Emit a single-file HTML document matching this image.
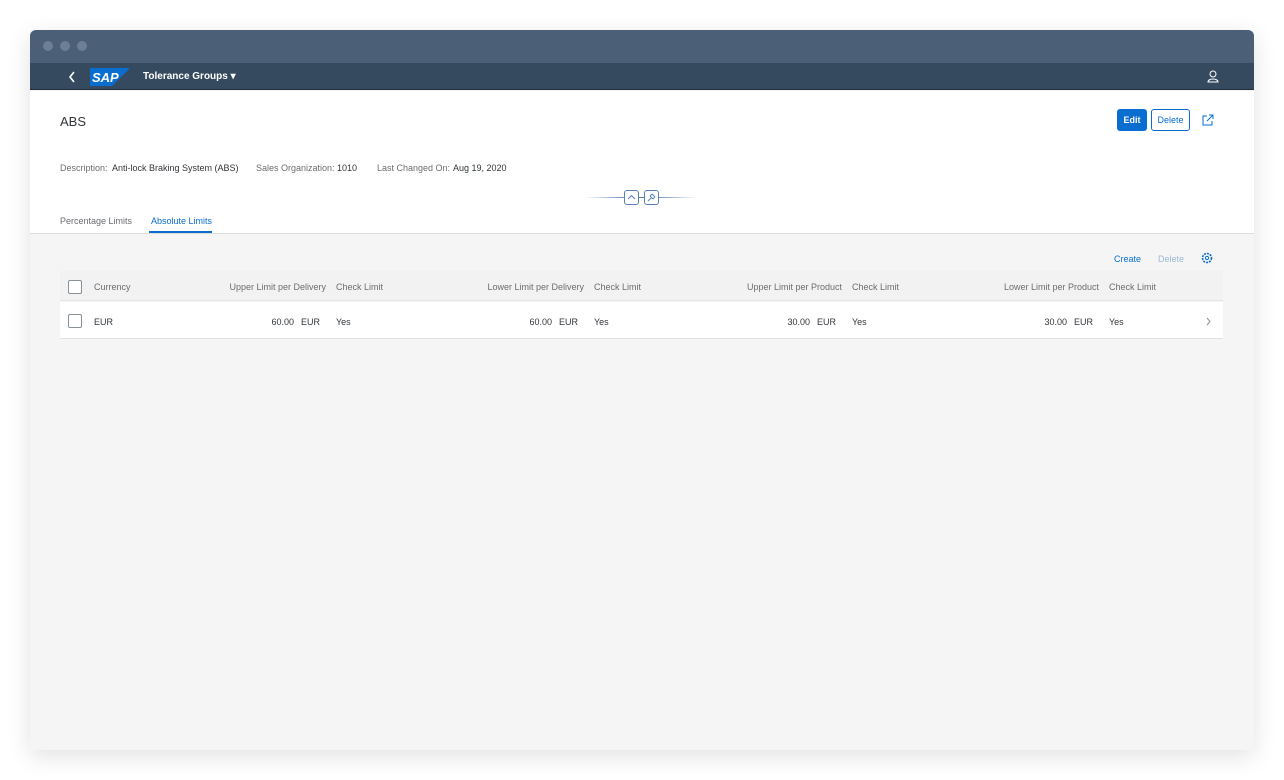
<!DOCTYPE html>
<html><head><style>
*{margin:0;padding:0;box-sizing:border-box}
body{width:1284px;height:780px;background:#fff;font-family:"Liberation Sans",sans-serif;position:relative;overflow:hidden}
.win{position:absolute;left:30px;top:30px;width:1224px;height:720px;background:#f5f5f5;border-radius:6px 6px 0 0;box-shadow:0 6px 24px rgba(0,0,0,.12);overflow:hidden}
.tb{position:absolute;left:0;top:0;width:100%;height:33px;background:#4b5f77}
.dot{position:absolute;top:11px;width:10px;height:10px;border-radius:50%;background:#6d7f94}
.shell{position:absolute;left:0;top:33px;width:100%;height:27px;background:#354a5f;border-bottom:1px solid #24303d}
.hdr{position:absolute;left:0;top:61px;width:100%;height:143px;background:#fff;border-bottom:1px solid #dcdcdc}
.t{position:absolute;font-size:9px;color:#32363a;white-space:nowrap}
.r{text-align:right}
.lbl{color:#6a6d70}
</style></head><body>
<div class="win">
<div class="tb"><div class="dot" style="left:13px"></div><div class="dot" style="left:30px"></div><div class="dot" style="left:47px"></div></div>
<div class="shell">
<svg style="position:absolute;left:38px;top:8px" width="8" height="12"><path d="M6 1L2 6l4 5" stroke="#fff" stroke-width="1.6" fill="none"/></svg>
<svg style="position:absolute;left:60px;top:5px" width="40" height="18"><path d="M0 0H40L22 18H0Z" fill="#0a6ed1"/><text x="2" y="14" font-family="Liberation Sans" font-weight="bold" font-style="italic" font-size="13" fill="#fff">SAP</text></svg>
<div class="t" style="left:113px;top:8px;color:#fff;font-weight:bold;font-size:10px">Tolerance Groups ▾</div>
<svg style="position:absolute;left:1177px;top:7px" width="12" height="13"><circle cx="6" cy="4" r="3" stroke="#fff" fill="none"/><path d="M1 12c0-4 10-4 10 0z" stroke="#fff" fill="none"/></svg>
</div>
<div class="hdr">
<div class="t" style="left:30px;top:23px;font-size:13px">ABS</div>
<div style="position:absolute;left:1087px;top:18px;width:30px;height:22px;background:#0a6ed1;border-radius:3px;color:#fff;font-size:9px;font-weight:bold;text-align:center;line-height:22px">Edit</div>
<div style="position:absolute;left:1121px;top:18px;width:39px;height:22px;border:1px solid #0a6ed1;border-radius:3px;color:#0a6ed1;font-size:9px;text-align:center;line-height:20px">Delete</div>
<svg style="position:absolute;left:1172px;top:23px" width="12" height="12"><path d="M5 2H1v9h9V7M7 1h4v4M11 1L5 7" stroke="#0a6ed1" fill="none"/></svg>
<div class="t lbl" style="left:30px;top:72px">Description:</div><div class="t" style="left:82px;top:72px">Anti-lock Braking System (ABS)</div>
<div class="t lbl" style="left:226px;top:72px">Sales Organization:</div><div class="t" style="left:307px;top:72px">1010</div>
<div class="t lbl" style="left:347px;top:72px">Last Changed On:</div><div class="t" style="left:423px;top:72px">Aug 19, 2020</div>
<div style="position:absolute;left:555px;top:106px;width:112px;height:1px;background:linear-gradient(90deg,rgba(90,130,180,0),#5a82b4 40%,#5a82b4 60%,rgba(90,130,180,0))"></div>
<div style="position:absolute;left:594px;top:99px;width:15px;height:15px;background:#fff;border:1px solid #5a82b4;border-radius:3px"></div>
<svg style="position:absolute;left:594px;top:99px" width="15" height="15"><path d="M4 9l3.5-3.5L11 9" stroke="#5a82b4" fill="none"/></svg>
<div style="position:absolute;left:614px;top:99px;width:15px;height:15px;background:#fff;border:1px solid #5a82b4;border-radius:3px"></div>
<svg style="position:absolute;left:614px;top:99px" width="15" height="15"><path d="M4 11l3-3M6 6l3 3M8 4l3 3M8 4L6 6M11 7L9 9" stroke="#5a82b4" fill="none"/></svg>
<div class="t lbl" style="left:30px;top:125px">Percentage Limits</div>
<div class="t" style="left:121px;top:125px;color:#0a6ed1">Absolute Limits</div>
<div style="position:absolute;left:119px;top:140px;width:63px;height:2px;background:#0a6ed1"></div>
</div>
<div class="t" style="left:1084px;top:224px;color:#0a6ed1">Create</div>
<div class="t" style="left:1128px;top:224px;color:#9fb8d6">Delete</div>
<svg style="position:absolute;left:1171px;top:222px" width="12" height="12"><circle cx="6" cy="6" r="4.5" stroke="#0a6ed1" stroke-dasharray="2 1" stroke-width="1.6" fill="none"/><circle cx="6" cy="6" r="1.6" stroke="#0a6ed1" fill="none"/></svg>
<div style="position:absolute;left:30px;top:241px;width:1163px;height:30px;background:#f2f2f2;border-bottom:1px solid #e5e5e5"></div>
<div style="position:absolute;left:30px;top:272px;width:1163px;height:37px;background:#fff;border-bottom:1px solid #e0e0e0"></div>
<div style="position:absolute;left:38px;top:250px;width:14px;height:14px;border:1px solid #89919a;border-radius:2px;background:#fff"></div>
<div style="position:absolute;left:38px;top:284px;width:14px;height:14px;border:1px solid #89919a;border-radius:2px;background:#fff"></div>
<div class="t lbl" style="left:64px;top:252px">Currency</div>
<div class="t lbl r" style="left:150px;width:146px;top:252px">Upper Limit per Delivery</div>
<div class="t lbl" style="left:306px;top:252px">Check Limit</div>
<div class="t lbl r" style="left:400px;width:154px;top:252px">Lower Limit per Delivery</div>
<div class="t lbl" style="left:564px;top:252px">Check Limit</div>
<div class="t lbl r" style="left:660px;width:152px;top:252px">Upper Limit per Product</div>
<div class="t lbl" style="left:822px;top:252px">Check Limit</div>
<div class="t lbl r" style="left:910px;width:159px;top:252px">Lower Limit per Product</div>
<div class="t lbl" style="left:1079px;top:252px">Check Limit</div>
<div class="t" style="left:64px;top:287px">EUR</div>
<div class="t r" style="left:200px;width:64px;top:287px">60.00</div><div class="t" style="left:271px;top:287px">EUR</div><div class="t" style="left:306px;top:287px">Yes</div>
<div class="t r" style="left:458px;width:64px;top:287px">60.00</div><div class="t" style="left:529px;top:287px">EUR</div><div class="t" style="left:564px;top:287px">Yes</div>
<div class="t r" style="left:716px;width:64px;top:287px">30.00</div><div class="t" style="left:787px;top:287px">EUR</div><div class="t" style="left:822px;top:287px">Yes</div>
<div class="t r" style="left:973px;width:64px;top:287px">30.00</div><div class="t" style="left:1044px;top:287px">EUR</div><div class="t" style="left:1079px;top:287px">Yes</div>
<svg style="position:absolute;left:1176px;top:287px" width="6" height="9"><path d="M1 1l3 3.5L1 8" stroke="#89919a" fill="none"/></svg>
</div>
</body></html>
